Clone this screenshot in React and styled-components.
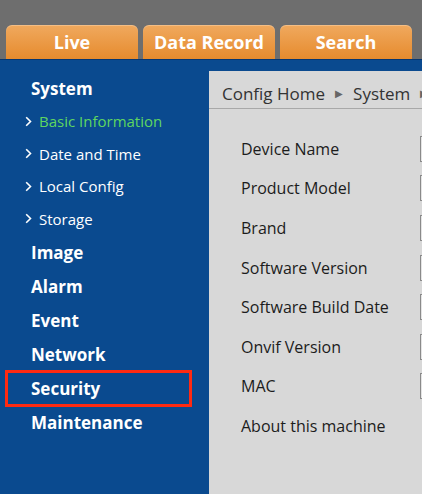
import React from 'react';
import styled, { createGlobalStyle, css } from 'styled-components';

const GlobalStyle = createGlobalStyle`
  html, body {
    margin: 0;
    padding: 0;
    background: #6e6e6e;
    overflow: hidden;
  }
  body {
    font-family: "Open Sans", "Noto Sans", sans-serif;
  }
`;

let Page = styled.div`
  width: 422px;
  height: 494px;
  display: flex;
  flex-direction: column;
  overflow: hidden;
`;

let TopBar = styled.div`
  height: 59px;
  flex: none;
  display: flex;
  align-items: flex-end;
  gap: 5px;
  padding-left: 6px;
  background: #6e6e6e;
`;

let Tab = styled.div`
  width: 132px;
  height: 33px;
  border-radius: 6px 6px 0 0;
  background: linear-gradient(#f0a95e, #e68b2e);
  box-shadow: inset 0 1px 0 rgba(255, 255, 255, 0.25);
  color: #fff;
  font-weight: 700;
  font-size: 18px;
  display: flex;
  align-items: center;
  justify-content: center;
  padding-bottom: 1px;
`;

let Main = styled.div`
  flex: 1;
  display: flex;
  background: #0a4a8f;
  border-top: 1px solid #063670;
`;

let Sidebar = styled.nav`
  width: 209px;
  flex: none;
  padding-top: 11px;
  box-sizing: border-box;
`;

let MenuTitle = styled.div`
  position: relative;
  height: 34px;
  display: flex;
  align-items: center;
  padding-left: 31px;
  color: #fff;
  font-weight: 700;
  font-size: 17px;

  ${(props) => props.marked && css`
    &::after {
      content: '';
      position: absolute;
      left: 5px;
      right: 17px;
      top: -1px;
      bottom: -2px;
      border: 3px solid #ff2a12;
    }
  `}
`;

let SubItem = styled.div`
  height: 32.5px;
  display: flex;
  align-items: center;
  gap: 7px;
  padding-left: 25px;
  font-size: 15px;
  color: ${(props) => (props.active ? '#5fd65f' : '#fff')};
`;

// little white ">" before each System sub-entry
let Chevron = () => (
  <svg width="7" height="11" viewBox="0 0 7 11" fill="none">
    <path d="M1.2 1.2l4.3 4.3-4.3 4.3" stroke="#fff" strokeWidth="1.6" />
  </svg>
);

let Content = styled.section`
  flex: 1;
  margin-top: 11px;
  background: #d8d8d8;
  overflow: hidden;
  min-width: 0;
`;

let Breadcrumb = styled.div`
  height: 38px;
  display: flex;
  align-items: center;
  gap: 10px;
  padding: 7px 0 0 13px;
  box-sizing: border-box;
  border-bottom: 1px solid #a8a8a8;
  color: #333;
  font-size: 17px;
  white-space: nowrap;
`;

let Crumb = styled.span`
  flex: none;
`;

let Arrow = styled.span`
  flex: none;
  font-size: 10px;
  color: #666;
`;

let Form = styled.div`
  padding: 20px 0 0 32px;
`;

let Row = styled.div`
  height: 39.6px;
  display: flex;
  align-items: center;
`;

let Label = styled.div`
  width: 179px;
  flex: none;
  font-size: 16px;
  color: #1c1c1c;
  white-space: nowrap;
`;

let Field = styled.div`
  width: 200px;
  height: 26px;
  flex: none;
  box-sizing: border-box;
  border: 1px solid #8a8a8a;
  background: #e4e4e4;
`;

const tabs = ['Live', 'Data Record', 'Search'];

const subItems = ['Basic Information', 'Date and Time', 'Local Config', 'Storage'];

const sections = ['Image', 'Alarm', 'Event', 'Network', 'Security', 'Maintenance'];

const fields = [
  'Device Name',
  'Product Model',
  'Brand',
  'Software Version',
  'Software Build Date',
  'Onvif Version',
  'MAC',
  'About this machine',
];

export default function App() {
  return (
    <Page>
      <GlobalStyle />
      <TopBar>
        {tabs.map((t) => (
          <Tab key={t}>{t}</Tab>
        ))}
      </TopBar>
      <Main>
        <Sidebar>
          <MenuTitle>System</MenuTitle>
          {subItems.map((s, i) => (
            <SubItem key={s} active={i === 0}>
              <Chevron />
              {s}
            </SubItem>
          ))}
          {sections.map((s) => (
            <MenuTitle key={s} marked={s === 'Security'}>
              {s}
            </MenuTitle>
          ))}
        </Sidebar>
        <Content>
          <Breadcrumb>
            <Crumb>Config Home</Crumb>
            <Arrow>▶</Arrow>
            <Crumb>System</Crumb>
            <Arrow>▶</Arrow>
          </Breadcrumb>
          <Form>
            {fields.map((f) => (
              <Row key={f}>
                <Label>{f}</Label>
                {f !== 'About this machine' && <Field />}
              </Row>
            ))}
          </Form>
        </Content>
      </Main>
    </Page>
  );
}
